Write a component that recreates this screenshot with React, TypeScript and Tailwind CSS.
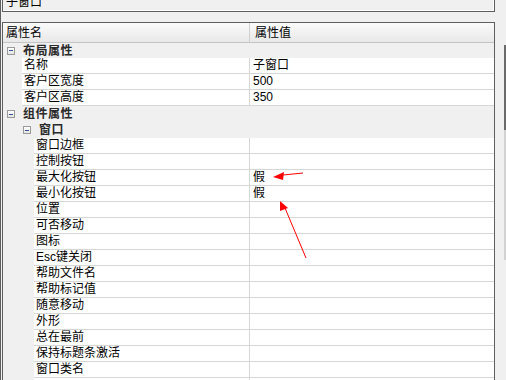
import React from "react";

// Types
type Row =
    | { kind: "cat"; level: 1 | 2; label: string; first?: boolean }
    | { kind: "item"; level: 1 | 2; label: string; value?: string };

const rows: Row[] = [
    { kind: "cat", level: 1, label: "布局属性", first: true },
    { kind: "item", level: 1, label: "名称", value: "子窗口" },
    { kind: "item", level: 1, label: "客户区宽度", value: "500" },
    { kind: "item", level: 1, label: "客户区高度", value: "350" },
    { kind: "cat", level: 1, label: "组件属性" },
    { kind: "cat", level: 2, label: "窗口" },
    { kind: "item", level: 2, label: "窗口边框" },
    { kind: "item", level: 2, label: "控制按钮" },
    { kind: "item", level: 2, label: "最大化按钮", value: "假" },
    { kind: "item", level: 2, label: "最小化按钮", value: "假" },
    { kind: "item", level: 2, label: "位置" },
    { kind: "item", level: 2, label: "可否移动" },
    { kind: "item", level: 2, label: "图标" },
    { kind: "item", level: 2, label: "Esc键关闭" },
    { kind: "item", level: 2, label: "帮助文件名" },
    { kind: "item", level: 2, label: "帮助标记值" },
    { kind: "item", level: 2, label: "随意移动" },
    { kind: "item", level: 2, label: "外形" },
    { kind: "item", level: 2, label: "总在最前" },
    { kind: "item", level: 2, label: "保持标题条激活" },
    { kind: "item", level: 2, label: "窗口类名" },
    { kind: "item", level: 2, label: "" },
];

function MinusBox() {
    return (
        <span className="flex h-[8px] w-[8px] shrink-0 items-center justify-center border border-[#9a9a9a] bg-gradient-to-b from-white to-[#e4e4e4]">
            <span className="h-px w-[4px] bg-[#3b4f9c]" />
        </span>
    );
}

function CategoryRow({ level, label, first }: { level: 1 | 2; label: string; first?: boolean }) {
    return (
        <div className={`flex shrink-0 items-center ${first ? "h-[15px]" : "h-[16px]"} ${level === 1 ? "pl-[4px]" : "pl-[20px]"}`}>
            <MinusBox />
            <span className="ml-[8px] font-bold tracking-[0.5px] text-[#2a2a2a]">{label}</span>
        </div>
    );
}

function ItemRow({ level, label, value }: { level: 1 | 2; label: string; value?: string }) {
    return (
        <div className="flex h-[16px] shrink-0">
            <div className={level === 1 ? "w-[19px] shrink-0" : "w-[31px] shrink-0"} />
            <div className="flex flex-1 border-b border-[#d6d6d6] bg-white">
                <div className={`${level === 1 ? "w-[228px]" : "w-[216px]"} shrink-0 border-r border-[#d6d6d6] pl-[2px] leading-[15px]`}>
                    {label}
                </div>
                <div className="flex-1 pl-[3px] leading-[15px]">{value}</div>
            </div>
        </div>
    );
}

export default function App() {
    return (
        <div className="relative flex h-[380px] w-[506px] overflow-hidden border-l border-[#5f5f5f] bg-[#f0f0f0] font-['Liberation_Sans','Noto_Sans_CJK_SC',sans-serif] text-[12px] text-black">
            {/* Main column */}
            <div className="ml-[1px] flex w-[493px] shrink-0 flex-col">
                {/* Title box */}
                <div className="h-[12px] shrink-0 overflow-hidden border-x border-b border-[#5f5f5f] shadow-[inset_-1px_-1px_0_#ffffff]">
                    <div className="-mt-[4px] pl-[3px] leading-[12px]">子窗口</div>
                </div>

                {/* Property grid */}
                <div className="mt-[10px] flex min-h-0 flex-1 flex-col overflow-hidden border-x border-t border-[#5f5f5f]">
                    <div className="flex h-[20px] shrink-0 border-b border-[#c4c4c4] bg-gradient-to-b from-[#fbfbfb] to-[#e8e8e8]">
                        <div className="flex w-[247px] items-center border-r border-[#d0d0d0] pl-[3px]">属性名</div>
                        <div className="flex flex-1 items-center pl-[5px]">属性值</div>
                    </div>
                    {rows.map((r, i) =>
                        r.kind === "cat" ? (
                            <CategoryRow key={i} level={r.level} label={r.label} first={r.first} />
                        ) : (
                            <ItemRow key={i} level={r.level} label={r.label} value={r.value} />
                        ),
                    )}
                </div>
            </div>

            {/* Right edge */}
            <div className="flex flex-1 flex-col items-end">
                <div className="h-[45px] shrink-0" />
                <div className="h-[85px] w-[2px] shrink-0 bg-[#6a6a6a]" />
                <div className="h-[130px] w-[2px] shrink-0 bg-[#d2d2d2]" />
            </div>

            {/* Red annotation arrows */}
            <svg className="pointer-events-none absolute left-0 top-0" width="506" height="380" viewBox="0 0 506 380">
                <line x1="282" y1="175" x2="302" y2="173" stroke="#ff0000" strokeWidth="1" />
                <polygon points="272,177 283,172 282,180" fill="#ff0000" />
                <line x1="284" y1="208" x2="305" y2="258" stroke="#ff0000" strokeWidth="1" />
                <polygon points="279,201 279,211 287,208" fill="#ff0000" />
            </svg>
        </div>
    );
}
